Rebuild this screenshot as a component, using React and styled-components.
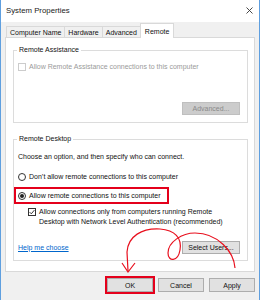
import React from "react";
import styled, { createGlobalStyle } from "styled-components";

const Global = createGlobalStyle`
  body {
    margin: 0;
    background: #ffffff;
  }
`;

const Window = styled.div`
  position: relative;
  width: 260px;
  height: 300px;
  overflow: hidden;
  box-sizing: border-box;
  border-left: 1px solid #5f9fdf;
  border-right: 1px solid #5f9fdf;
  background: #f0f0f0;
  font-family: "Liberation Sans", Arial, sans-serif;
  font-size: 7px;
  color: #1a1a1a;
  display: flex;
  flex-direction: column;
`;

const TitleBar = styled.div`
  height: 22px;
  flex: none;
  box-sizing: border-box;
  background: #ffffff;
  display: flex;
  align-items: center;
  justify-content: space-between;
  padding: 0 6px 2px 5px;
`;

const Title = styled.span`
  font-size: 7.8px;
  color: #222;
`;

const Body = styled.div`
  padding: 2px 4px 0 4px;
`;

const TabStrip = styled.div`
  display: flex;
  align-items: flex-end;
  height: 14px;
  padding-left: 1px;
  position: relative;
  z-index: 1;
  margin-bottom: -1px;
`;

const Tab = styled.div`
  box-sizing: border-box;
  height: ${p => (p.$active ? "15px" : "12px")};
  padding: 0 ${p => (p.$active ? "4px" : "3px")};
  margin: 0 ${p => (p.$active ? "-1px" : "0")};
  display: flex;
  align-items: center;
  background: ${p => (p.$active ? "#ffffff" : "#f0f0f0")};
  border: 1px solid #d9d9d9;
  border-bottom: ${p => (p.$active ? "none" : "1px solid #d9d9d9")};
  border-left-width: ${p => (p.$first || p.$active ? "1px" : "0")};
  color: #111;
`;

const Panel = styled.div`
  background: #ffffff;
  border: 1px solid #d9d9d9;
  padding: 7px 6px 10px 7px;
  display: flex;
  flex-direction: column;
  gap: 11px;
`;

const Group = styled.fieldset`
  margin: 0;
  border: 1px solid #dcdcdc;
  padding: ${p => p.$pad || "7px 7px 7px 4px"};
  display: flex;
  flex-direction: column;
  min-width: 0;
`;

const Legend = styled.legend`
  padding: 0 2px;
  margin-left: -1px;
  line-height: 10px;
  color: #111;
`;

const Line = styled.div`
  line-height: 10px;
  color: ${p => (p.$disabled ? "#9a9a9a" : "#111")};
  display: flex;
  align-items: ${p => (p.$top ? "flex-start" : "center")};
  gap: 3px;
  margin-top: ${p => p.$mt || 0}px;
  margin-left: ${p => p.$ml || 0}px;
`;

const Box = styled.span`
  flex: none;
  box-sizing: border-box;
  width: 8px;
  height: 8px;
  margin-top: ${p => (p.$top ? "1px" : "0")};
  border: 1px solid ${p => (p.$disabled ? "#cccccc" : "#333333")};
  background: #ffffff;
  display: flex;
  align-items: center;
  justify-content: center;
`;

const Radio = styled.span`
  flex: none;
  box-sizing: border-box;
  width: 8px;
  height: 8px;
  border-radius: 50%;
  border: 1px solid #333333;
  background: #ffffff;
  display: flex;
  align-items: center;
  justify-content: center;
  &::after {
    content: "";
    width: 4px;
    height: 4px;
    border-radius: 50%;
    background: ${p => (p.$checked ? "#222222" : "transparent")};
  }
`;

const Marked = styled.div`
  align-self: flex-start;
  border: 2px solid #e4001b;
  margin: 5px 0 0 -4px;
  padding: 2px 6px 1px 2px;
`;

const Button = styled.div`
  box-sizing: border-box;
  width: ${p => p.$w || 46}px;
  height: ${p => p.$h || 14}px;
  display: flex;
  align-items: center;
  justify-content: center;
  background: ${p => (p.$disabled ? "#cccccc" : "#e1e1e1")};
  border: 1px solid ${p => (p.$disabled ? "#bfbfbf" : "#adadad")};
  color: ${p => (p.$disabled ? "#8a8a8a" : "#111")};
  outline: ${p => (p.$marked ? "2px solid #e4001b" : "none")};
`;

const RightRow = styled.div`
  display: flex;
  justify-content: flex-end;
  margin-top: ${p => p.$mt || 0}px;
`;

const BottomRow = styled.div`
  display: flex;
  justify-content: space-between;
  align-items: center;
  margin-top: 14px;
`;

const Link = styled.span`
  color: #0066cc;
  text-decoration: underline;
  line-height: 10px;
`;

const Footer = styled.div`
  display: flex;
  justify-content: flex-end;
  gap: 5px;
  padding: 6px 4px 0 0;
`;

const Overlay = styled.svg`
  position: absolute;
  left: -1px;
  top: 0;
  pointer-events: none;
`;

const Check = () => (
  <svg width="6" height="6" viewBox="0 0 6 6">
    <path d="M0.6 3.1 L2.3 4.8 L5.4 1.1" fill="none" stroke="#222" strokeWidth="0.9" />
  </svg>
);

export default function App() {
  return (
    <>
      <Global />
      <Window>
        <TitleBar>
          <Title>System Properties</Title>
          <svg width="7" height="7" viewBox="0 0 7 7">
            <path d="M0.5 0.5 L6.5 6.5 M6.5 0.5 L0.5 6.5" stroke="#333" strokeWidth="0.9" />
          </svg>
        </TitleBar>
        <Body>
          <TabStrip>
            <Tab $first>Computer Name</Tab>
            <Tab>Hardware</Tab>
            <Tab>Advanced</Tab>
            <Tab $active>Remote</Tab>
          </TabStrip>
          <Panel>
            <Group>
              <Legend>Remote Assistance</Legend>
              <Line $disabled>
                <Box $disabled />
                Allow Remote Assistance connections to this computer
              </Line>
              <RightRow $mt={30}>
                <Button $disabled $w={58} $h={13}>Advanced...</Button>
              </RightRow>
            </Group>
            <Group $pad="8px 7px 6px 4px">
              <Legend>Remote Desktop</Legend>
              <Line>Choose an option, and then specify who can connect.</Line>
              <Line $mt={10}>
                <Radio />
                Don’t allow remote connections to this computer
              </Line>
              <Marked>
                <Line>
                  <Radio $checked />
                  Allow remote connections to this computer
                </Line>
              </Marked>
              <Line $top $mt={3} $ml={10}>
                <Box $top>
                  <Check />
                </Box>
                <span>
                  Allow connections only from computers running Remote
                  <br />
                  Desktop with Network Level Authentication (recommended)
                </span>
              </Line>
              <BottomRow>
                <Link>Help me choose</Link>
                <Button $w={58} $h={13}>Select Users...</Button>
              </BottomRow>
            </Group>
          </Panel>
        </Body>
        <Footer>
          <Button $marked>OK</Button>
          <Button>Cancel</Button>
          <Button>Apply</Button>
        </Footer>
        <Overlay width="260" height="300" viewBox="0 0 260 300">
          <path
            d="M235 268 C234 252, 218 233, 195 233 C182 233, 168 242, 168 253 C168 262, 178 262, 180 250 C182 238, 175 230, 160 229 C142 228, 128 236, 127 252 L128 271"
            fill="none"
            stroke="#e8101e"
            strokeWidth="1.2"
          />
          <path d="M122 263 L128 272 L135 263" fill="none" stroke="#e8101e" strokeWidth="1.2" />
        </Overlay>
      </Window>
    </>
  );
}
